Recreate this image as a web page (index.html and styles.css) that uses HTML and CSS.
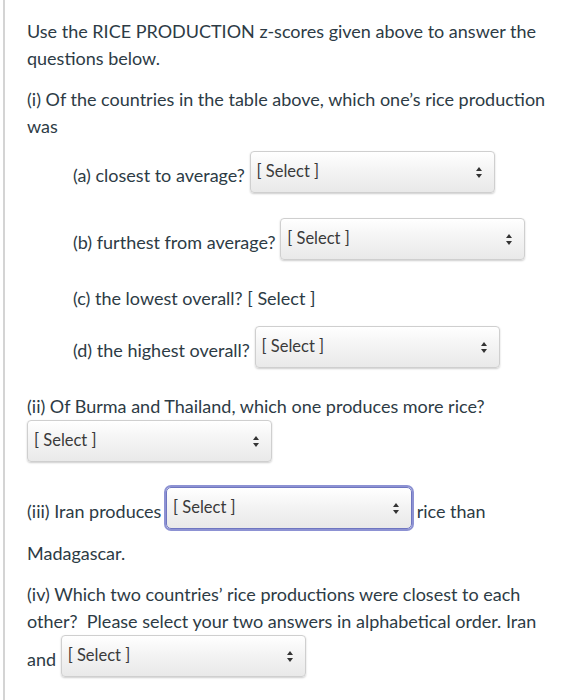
FILE: index.html
```html
<!DOCTYPE html>
<html>
<head>
<meta charset="utf-8">
<link rel="stylesheet" href="styles.css">
</head>
<body>
<div class="page">
  <p class="para">Use the RICE PRODUCTION z-scores given above to answer the questions below.</p>
  <p class="para para-i">(i) Of the countries in the table above, which one’s rice production was</p>
  <div class="items">
    <p class="item">(a) closest to average? <span class="sel"><span class="sel-text">[ Select ]</span><span class="arrows"></span></span></p>
    <p class="item">(b) furthest from average? <span class="sel"><span class="sel-text">[ Select ]</span><span class="arrows"></span></span></p>
    <p class="item">(c) the lowest overall? [ Select ]</p>
    <p class="item">(d) the highest overall? <span class="sel"><span class="sel-text">[ Select ]</span><span class="arrows"></span></span></p>
  </div>
  <p class="para">(ii) Of Burma and Thailand, which one produces more rice?<br><span class="sel sel-block"><span class="sel-text">[ Select ]</span><span class="arrows"></span></span></p>
  <p class="para">(iii) Iran produces <span class="sel sel-focus"><span class="sel-text">[ Select ]</span><span class="arrows"></span></span> rice than Madagascar.</p>
  <p class="para">(iv) Which two countries’ rice productions were closest to each other?&nbsp; Please select your two answers in alphabetical order. Iran and <span class="sel"><span class="sel-text">[ Select ]</span><span class="arrows"></span></span></p>
</div>
</body>
</html>
```

FILE: styles.css
```css
html, body {
  margin: 0;
  padding: 0;
  background: #fff;
}

.page {
  margin-left: 3px;
  border-left: 2px solid #d4d4d4;
  min-height: 700px;
  box-sizing: border-box;
  padding: 18px 12px 0 22px;
  width: 573px;
  font-family: Lato, "Open Sans", sans-serif;
  font-size: 18px;
  line-height: 27px;
  color: #2d3b45;
}

.para {
  margin: 0 0 14px 0;
}

.para-i {
  margin-bottom: 11px;
}

.items {
  padding-left: 46px;
}

.item {
  margin: 0 0 14px 0;
}

.sel {
  display: inline-flex;
  align-items: center;
  justify-content: space-between;
  box-sizing: border-box;
  width: 245px;
  height: 42px;
  margin-bottom: 11px;
  padding: 0 11px 0 6px;
  border: 1px solid #cfcfcf;
  border-radius: 4px;
  background: linear-gradient(to bottom, #ffffff 0%, #f4f4f4 45%, #e9e9e9 100%);
  box-shadow: 0 1px 2px rgba(0, 0, 0, 0.2);
  vertical-align: 4px;
  font-size: 16.5px;
  line-height: 20px;
  color: #3a3a3a;
}

.sel-block {
  vertical-align: top;
}

.sel-focus {
  width: 246px;
  border: 1px solid #6f76c0;
  border-radius: 5px;
  box-shadow: 0 0 0 2px #8d92d3;
}

.sel-text {
  position: relative;
  top: -1px;
}

.arrows {
  position: relative;
  width: 7px;
  height: 11px;
}

.arrows::before,
.arrows::after {
  content: "";
  position: absolute;
  left: 0;
  width: 0;
  height: 0;
  border-left: 3.5px solid transparent;
  border-right: 3.5px solid transparent;
}

.arrows::before {
  top: 0;
  border-bottom: 4px solid #333;
}

.arrows::after {
  bottom: 0;
  border-top: 4px solid #333;
}
```
